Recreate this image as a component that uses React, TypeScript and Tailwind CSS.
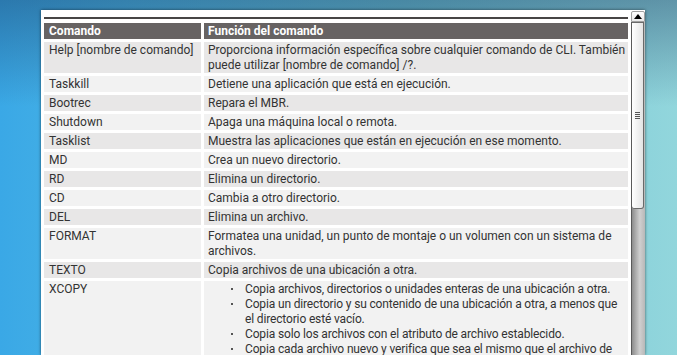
import React from 'react';

type Row = { cmd: string; desc?: string; bullets?: string[] };

const rows: Row[] = [
  { cmd: 'Help [nombre de comando]', desc: 'Proporciona información específica sobre cualquier comando de CLI. También puede utilizar [nombre de comando] /?.' },
  { cmd: 'Taskkill', desc: 'Detiene una aplicación que está en ejecución.' },
  { cmd: 'Bootrec', desc: 'Repara el MBR.' },
  { cmd: 'Shutdown', desc: 'Apaga una máquina local o remota.' },
  { cmd: 'Tasklist', desc: 'Muestra las aplicaciones que están en ejecución en ese momento.' },
  { cmd: 'MD', desc: 'Crea un nuevo directorio.' },
  { cmd: 'RD', desc: 'Elimina un directorio.' },
  { cmd: 'CD', desc: 'Cambia a otro directorio.' },
  { cmd: 'DEL', desc: 'Elimina un archivo.' },
  { cmd: 'FORMAT', desc: 'Formatea una unidad, un punto de montaje o un volumen con un sistema de archivos.' },
  { cmd: 'TEXTO', desc: 'Copia archivos de una ubicación a otra.' },
  {
    cmd: 'XCOPY',
    bullets: [
      'Copia archivos, directorios o unidades enteras de una ubicación a otra.',
      'Copia un directorio y su contenido de una ubicación a otra, a menos que el directorio esté vacío.',
      'Copia solo los archivos con el atributo de archivo establecido.',
      'Copia cada archivo nuevo y verifica que sea el mismo que el archivo de origen.',
    ],
  },
];

const ScrollBar: React.FC = () => (
  <div className="w-[14px] flex flex-col shrink-0">
    {/* botón de subir */}
    <div className="h-[11px] mt-[1px] border border-[#a0a0a0] rounded-t-[2px] bg-[linear-gradient(to_bottom,#ffffff,#e8e8e8)] flex items-center justify-center">
      <div className="w-0 h-0 border-l-[4px] border-r-[4px] border-b-[5px] border-l-transparent border-r-transparent border-b-black" />
    </div>
    <div className="flex-1 flex flex-col border-l border-[#5a5a5a] bg-[linear-gradient(to_right,#8d8d8d,#cfcfcf_60%,#b8b8b8)]">
      <div className="h-[187px] mr-[1px] rounded-b-[3px] border border-l-0 border-[#6a6a6a] bg-[linear-gradient(to_right,#ffffff,#e4e4e4)] flex items-center justify-center">
        <div className="flex flex-col gap-[1px] w-[5px]">
          <div className="h-[1px] bg-[#555]" />
          <div className="h-[1px] bg-[#555]" />
          <div className="h-[1px] bg-[#555]" />
          <div className="h-[1px] bg-[#555]" />
        </div>
      </div>
    </div>
  </div>
);

const App: React.FC = () => {
  return (
    <div className="w-[677px] h-[355px] overflow-hidden bg-[linear-gradient(to_bottom,rgba(20,50,90,0.4),rgba(20,50,90,0)_30%),linear-gradient(to_right,#3aa8e6,#4cb6e4_20%,#6cc2d4_60%,#92d6dc)] font-['Roboto','Liberation_Sans',Arial,sans-serif]">
      <div className="ml-[41px] mt-[10px] w-[604px] h-[345px] bg-white flex shadow-[0_0_3px_rgba(0,0,0,0.55)]">
        <div className="flex-1 pl-[3px] pr-[3px] pt-[7px] overflow-hidden">
          {/* línea superior */}
          <div className="h-[2px] bg-[#474545]" />

          <div className="mt-[4px] grid grid-cols-[157px_1fr] gap-[3px] text-[12px] leading-[15px] text-[#333]">
            <div className="bg-[#676363] text-white font-bold pl-[5px] py-[0.5px]">Comando</div>
            <div className="bg-[#676363] text-white font-bold pl-[4px] py-[0.5px]">Función del comando</div>

            {rows.map((row, i) => {
              const bg = i % 2 === 0 ? 'bg-[#e8e7e7]' : 'bg-[#f2f2f2]';
              return (
                <React.Fragment key={row.cmd}>
                  <div className={`${bg} pl-[5px] py-[0.5px]`}>{row.cmd}</div>
                  <div className={`${bg} pl-[4px] pr-[2px] py-[0.5px]`}>
                    {row.desc}
                    {row.bullets && (
                      <ul className="-mr-[2px] tracking-[-0.15px]">
                        {row.bullets.map((b) => (
                          <li key={b} className="flex">
                            <span className="w-[37px] shrink-0 flex items-center pl-[23px] h-[15px]">
                              <span className="w-[2px] h-[2px] bg-[#555]" />
                            </span>
                            <span>{b}</span>
                          </li>
                        ))}
                      </ul>
                    )}
                  </div>
                </React.Fragment>
              );
            })}
          </div>
        </div>
        <ScrollBar />
      </div>
    </div>
  );
};

export default App;
